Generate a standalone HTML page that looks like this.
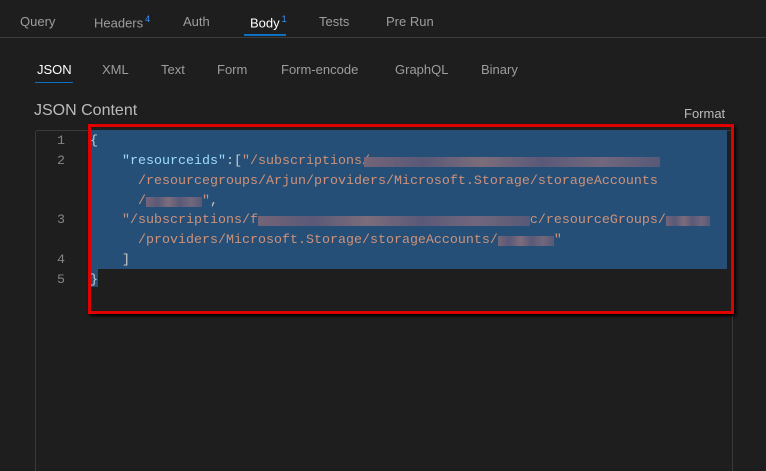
<!DOCTYPE html>
<html><head><style>
body{margin:0;width:766px;height:469px;background:#1e1e1e;overflow:hidden;font-family:"Liberation Sans",sans-serif;position:relative}
.a{position:absolute;white-space:pre}
.t{color:#9d9d9d;font-size:13px}
.mono{font-family:"Liberation Mono",monospace;font-size:13.33px;color:#ce9178}
.ln{color:#858585;font-family:"Liberation Mono",monospace;font-size:13.33px;width:30px;text-align:right}
.blur{position:absolute;height:10px;background:linear-gradient(90deg,#7d6778,#5f5a78,#86707c,#5f5a78,#7a6a7e,#5c5a77);opacity:.9}
</style></head><body>
<div class="a t" style="left:20px;top:14px">Query</div>
<div class="a t" style="left:94px;top:14px">Headers<sup style="color:#3794ff;font-size:9px;margin-left:2px">4</sup></div>
<div class="a t" style="left:183px;top:14px">Auth</div>
<div class="a t" style="left:250px;top:14px;color:#fff">Body<sup style="color:#3794ff;font-size:9px;margin-left:2px">1</sup></div>
<div class="a t" style="left:319px;top:14px">Tests</div>
<div class="a t" style="left:386px;top:14px">Pre Run</div>
<div class="a" style="left:244px;top:34px;width:42px;height:2px;background:#0e70c0"></div>
<div class="a" style="left:0;top:37px;width:766px;height:1px;background:#3c3c3c"></div>
<div class="a t" style="left:37px;top:62px;color:#fff">JSON</div>
<div class="a t" style="left:102px;top:62px">XML</div>
<div class="a t" style="left:161px;top:62px">Text</div>
<div class="a t" style="left:217px;top:62px">Form</div>
<div class="a t" style="left:281px;top:62px">Form-encode</div>
<div class="a t" style="left:395px;top:62px">GraphQL</div>
<div class="a t" style="left:481px;top:62px">Binary</div>
<div class="a" style="left:35px;top:82px;width:38px;height:1px;background:#0e70c0"></div>
<div class="a" style="left:34px;top:102px;color:#bbb;font-size:16px">JSON Content</div>
<div class="a" style="left:684px;top:106px;color:#bbb;font-size:13px">Format</div>
<div class="a" style="left:35px;top:130px;width:696px;height:340px;border:1px solid #3a3a3a;border-bottom:none;border-radius:3px 3px 0 0"></div>
<div class="a" style="left:90px;top:130px;width:637px;height:139px;background:#264f78"></div>
<div class="a" style="left:90px;top:269px;width:8px;height:18px;background:#264f78"></div>
<div class="a" style="left:88px;top:124px;width:640px;height:184px;border:3px solid #e00000;box-shadow:2px 2px 3px #000"></div>
<div class="a ln" style="left:35px;top:134px">1</div>
<div class="a ln" style="left:35px;top:154px">2</div>
<div class="a ln" style="left:35px;top:213px">3</div>
<div class="a ln" style="left:35px;top:253px">4</div>
<div class="a ln" style="left:35px;top:273px">5</div>
<div class="a mono" style="left:90px;top:134px;color:#ccc">{</div>
<div class="a mono" style="left:122px;top:154px"><span style="color:#9cdcfe">"resourceids"</span><span style="color:#ccc">:[</span>"/subscriptions/</div>
<div class="blur" style="left:364px;top:157px;width:296px"></div>
<div class="a mono" style="left:138px;top:174px">/resourcegroups/Arjun/providers/Microsoft.Storage/storageAccounts</div>
<div class="a mono" style="left:138px;top:194px">/       "<span style="color:#ccc">,</span></div>
<div class="blur" style="left:146px;top:197px;width:56px"></div>
<div class="a mono" style="left:122px;top:213px">"/subscriptions/f                                  c/resourceGroups/</div>
<div class="blur" style="left:258px;top:216px;width:272px"></div>
<div class="blur" style="left:666px;top:216px;width:44px"></div>
<div class="a mono" style="left:138px;top:233px">/providers/Microsoft.Storage/storageAccounts/       "</div>
<div class="blur" style="left:498px;top:236px;width:56px"></div>
<div class="a mono" style="left:122px;top:253px;color:#ccc">]</div>
<div class="a mono" style="left:90px;top:273px;color:#ccc">}</div>
</body></html>
